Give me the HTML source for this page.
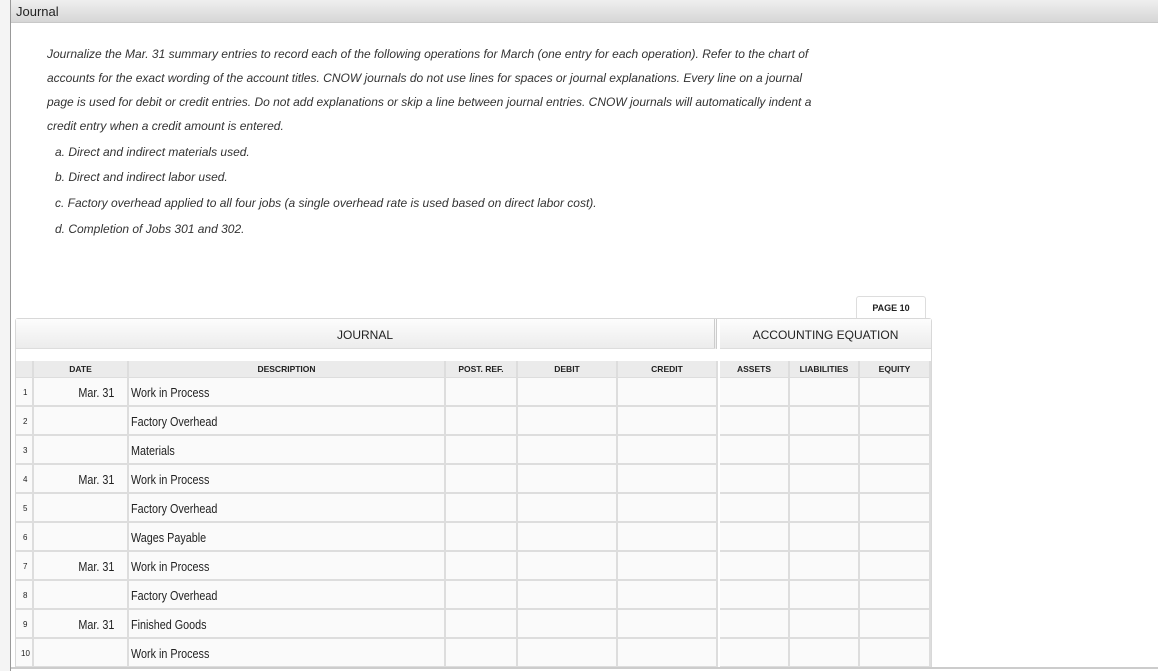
<!DOCTYPE html>
<html><head><style>
*{margin:0;padding:0;box-sizing:border-box}
body{width:1158px;height:671px;overflow:hidden;background:#fff;font-family:"Liberation Sans",Arial,sans-serif;position:relative;color:#222}
.left{position:absolute;left:0;top:0;width:11px;height:671px;background:#f4f4f4;border-right:1px solid #999}
.title{position:absolute;left:11px;top:0;width:1147px;height:23px;background:linear-gradient(#efefef,#d6d6d6);border-bottom:1px solid #c8c8c8;font-size:13px;padding:4px 0 0 5px;color:#222}
.ins{position:absolute;left:47px;font-size:12px;font-style:italic;color:#333;white-space:nowrap}
.li{position:absolute;left:55px;font-size:12px;font-style:italic;color:#333;white-space:nowrap}
.tab{position:absolute;left:856px;top:296px;width:70px;height:23px;border:1px solid #ddd;border-bottom:none;border-radius:3px 3px 0 0;background:#fff;font-size:9px;font-weight:bold;text-align:center;padding-top:6px;color:#222}
.box{position:absolute;left:15px;top:318px;width:917px;height:350px;border:1px solid #d8d8d8;border-radius:3px 3px 0 0;background:#fff}
.hb{position:absolute;top:0;height:30px;background:linear-gradient(#fdfdfd,#ececec);border-bottom:1px solid #ddd;font-size:12px;text-align:center;padding-top:9px;color:#222}
.c{position:absolute;border-right:2px solid #ddd;border-bottom:2px solid #ddd;background:#fafafa}
.h{position:absolute;top:42px;height:17px;background:#ebebeb;border-right:2px solid #ddd;border-bottom:1px solid #ddd;font-size:8.5px;font-weight:bold;text-align:center;padding-top:3px;color:#222}
.t{position:absolute;font-size:13px;color:#222;transform:scaleX(0.83);transform-origin:0 0;white-space:nowrap}
.dt{position:absolute;font-size:13px;color:#222;transform:scaleX(0.83);transform-origin:100% 0;white-space:nowrap;right:817px}
.n{position:absolute;font-size:8px;color:#222}
.bot{position:absolute;left:11px;top:667px;width:1147px;height:2px;background:#ccc}
</style></head><body>
<div class="left"></div>
<div class="title">Journal</div>
<div class="ins" style="top:47px">Journalize the Mar. 31 summary entries to record each of the following operations for March (one entry for each operation). Refer to the chart of</div>
<div class="ins" style="top:71px">accounts for the exact wording of the account titles. CNOW journals do not use lines for spaces or journal explanations. Every line on a journal</div>
<div class="ins" style="top:95px">page is used for debit or credit entries. Do not add explanations or skip a line between journal entries. CNOW journals will automatically indent a</div>
<div class="ins" style="top:119px">credit entry when a credit amount is entered.</div>
<div class="li" style="top:145px">a. Direct and indirect materials used.</div>
<div class="li" style="top:170px">b. Direct and indirect labor used.</div>
<div class="li" style="top:196px">c. Factory overhead applied to all four jobs (a single overhead rate is used based on direct labor cost).</div>
<div class="li" style="top:222px">d. Completion of Jobs 301 and 302.</div>
<div class="tab">PAGE 10</div>
<div class="box">
<div class="hb" style="left:0;width:701px;border-right:3px double #ccc">JOURNAL</div>
<div class="hb" style="left:704px;width:211px">ACCOUNTING EQUATION</div>
<div class="h" style="left:0;width:18px"></div>
<div class="h" style="left:18px;width:95px">DATE</div>
<div class="h" style="left:113px;width:317px">DESCRIPTION</div>
<div class="h" style="left:430px;width:72px">POST. REF.</div>
<div class="h" style="left:502px;width:100px">DEBIT</div>
<div class="h" style="left:602px;width:100px">CREDIT</div>
<div class="h" style="left:704px;width:70px">ASSETS</div>
<div class="h" style="left:774px;width:70px">LIABILITIES</div>
<div class="h" style="left:844px;width:71px">EQUITY</div>
<div id="rows"></div>
</div>
<div class="bot"></div>
<script>
var d=[["Mar. 31","Work in Process"],["","Factory Overhead"],["","Materials"],["Mar. 31","Work in Process"],["","Factory Overhead"],["","Wages Payable"],["Mar. 31","Work in Process"],["","Factory Overhead"],["Mar. 31","Finished Goods"],["","Work in Process"]];
var cols=[[0,18],[18,95],[113,317],[430,72],[502,100],[602,100],[704,70],[774,70],[844,71]];
var h="";
for(var i=0;i<10;i++){var y=59+i*29;
cols.forEach(function(c){h+='<div class="c" style="left:'+c[0]+'px;top:'+y+'px;width:'+c[1]+'px;height:29px"></div>';});
h+='<div class="n" style="left:'+(i==9?5:7)+'px;top:'+(y+10)+'px">'+(i+1)+'</div>';
if(d[i][0])h+='<div class="dt" style="top:'+(y+7)+'px">'+d[i][0]+'</div>';
h+='<div class="t" style="left:115px;top:'+(y+7)+'px">'+d[i][1]+'</div>';}
document.getElementById("rows").innerHTML=h;
</script>
</body></html>
